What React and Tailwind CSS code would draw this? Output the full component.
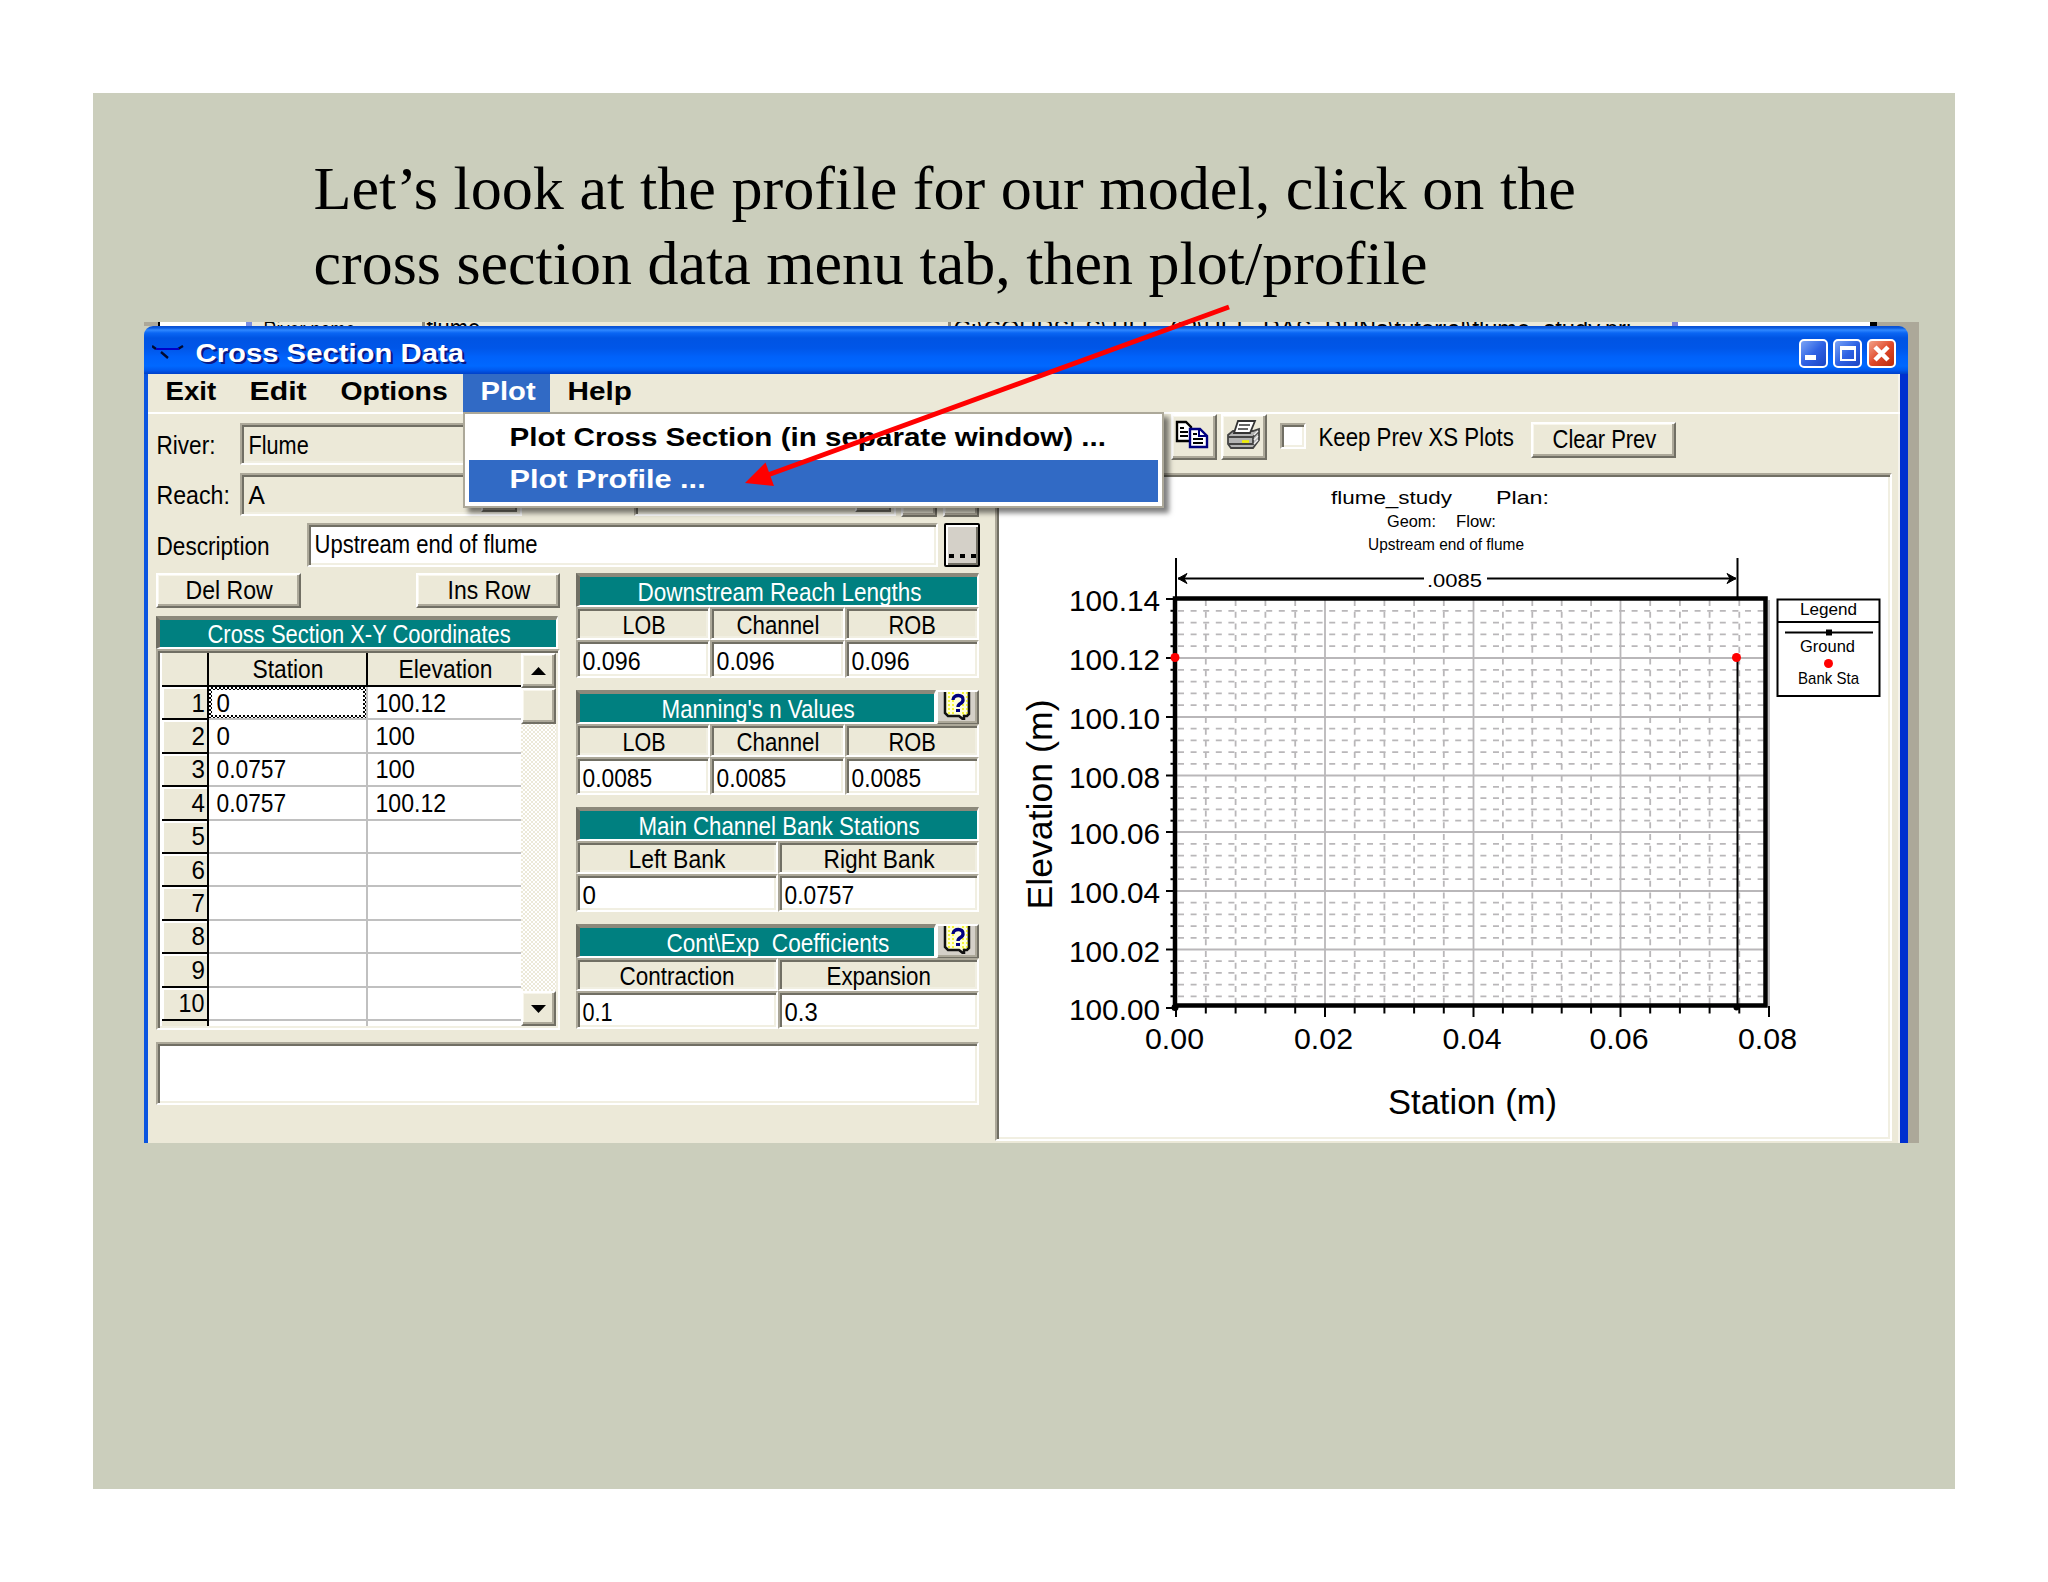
import React, { useLayoutEffect, useRef, useState } from 'react';

const sunken = 'border-2 border-t-[#aca899] border-l-[#aca899] border-r-white border-b-white shadow-[inset_2px_2px_0_#716f64,inset_-2px_-2px_0_#f1efe2]';
const raised = 'border-2 border-t-white border-l-white border-r-[#716f64] border-b-[#716f64] shadow-[inset_-2px_-2px_0_#aca899,inset_1px_1px_0_#f8f6ec] bg-[#ece9d8]';

// stretches its text to w pixels, bitmap fonts are narrower than Arial
function Fit({ w, className = '', children }) {
  const ref = useRef(null);
  const [scale, setScale] = useState(1);

  useLayoutEffect(() => {
    if (ref.current) setScale((w + 2) / ref.current.offsetWidth);
  }, [w]);

  return (
    <span className={'block shrink-0 whitespace-pre ' + className} style={{ width: w }}>
      <span ref={ref} className="inline-block origin-left" style={{ transform: `translateX(-0.5px) scaleX(${scale})` }}>{children}</span>
    </span>
  );
}

function TitleBar() {
  return (
    <div className="flex h-[48px] shrink-0 items-center rounded-t-[9px] bg-[linear-gradient(180deg,#0a4fd0_0px,#0a5be0_2px,#3088ff_4px,#0a66f4_7px,#0054e3_12px,#0056e8_22px,#0062fb_31px,#0068ff_40px,#005af0_44px,#0040c8_48px)] pl-2 pr-3">
      <svg className="mt-[5px] h-[16px] w-[32px] shrink-0" viewBox="0 0 32 16">
        <path d="M0 1 L4 4 M26 4 L31 1 M9 7 L16 13" fill="none" stroke="#000a30" strokeWidth="2.4" />
        <path d="M4 4 H27" stroke="#0000c8" strokeWidth="2" />
      </svg>
      <Fit w={266} className="ml-[12px] mt-[5px] text-[26px] font-bold leading-[36px] text-white [text-shadow:2px_2px_0_#0a1883]">Cross Section Data</Fit>
      <div className="ml-auto mt-[6px] flex gap-[5px]">
        <div className="flex h-[29px] w-[29px] items-end rounded-[5px] border-2 border-white bg-linear-to-br from-[#7ba3f5] via-[#2f62e4] to-[#1c45c4] pb-[6px] pl-[4px]">
          <div className="h-[5px] w-[11px] bg-white"></div>
        </div>
        <div className="flex h-[29px] w-[29px] items-center justify-center rounded-[5px] border-2 border-white bg-linear-to-br from-[#7ba3f5] via-[#2f62e4] to-[#1c45c4]">
          <div className="h-[15px] w-[16px] border-2 border-t-4 border-white"></div>
        </div>
        <div className="flex h-[29px] w-[29px] items-center justify-center rounded-[5px] border-2 border-white bg-linear-to-br from-[#f0a088] via-[#e0492a] to-[#b92b08]">
          <svg className="h-[17px] w-[17px]" viewBox="0 0 17 17"><path d="M2 2 L15 15 M15 2 L2 15" stroke="#fff" strokeWidth="4.5" /></svg>
        </div>
      </div>
    </div>
  );
}

function MenuBar() {
  return (
    <div className="flex h-[40px] shrink-0 items-start border-b-2 border-white text-[26px] font-bold leading-[34px]">
      <Fit w={49} className="ml-[18px]">Exit</Fit>
      <Fit w={55} className="ml-[35px]">Edit</Fit>
      <Fit w={105} className="ml-[36px]">Options</Fit>
      <div className="ml-[17px] h-[38px] w-[87px] bg-[#316ac5] pl-[18px] text-white"><Fit w={53}>Plot</Fit></div>
      <Fit w={62} className="ml-[18px]">Help</Fit>
    </div>
  );
}

function PlotMenu() {
  return (
    <div className="absolute left-[319px] top-[90px] h-[96px] w-[701px] border-2 border-[#aca899] bg-white p-[4px] pt-0 text-[26px] font-bold shadow-[5px_5px_5px_rgba(0,0,0,0.5)]">
      <div className="h-[46px] pl-[41px] leading-[47px]"><Fit w={594}>Plot Cross Section (in separate window) ...</Fit></div>
      <div className="h-[42px] bg-[#316ac5] pl-[41px] leading-[38px] text-white"><Fit w={194}>Plot Profile ...</Fit></div>
    </div>
  );
}

function HelpButton() {
  return (
    <div className="flex h-[35px] w-[43px] shrink-0 justify-center border-2 border-b-[#716f64] border-l-white border-r-[#716f64] border-t-white bg-[#d4d0c8] shadow-[inset_-2px_-2px_0_#aca899]">
      <svg className="h-[28px] w-[30px]" viewBox="0 0 30 28">
        <path d="M3 0 H24 V23 H21 V26 L17 23 H3 Z" fill="#ffffd8" />
        <path d="M6 0 V22 M10 0 V22 M20 0 V22 M24 0 V22 M21 22 V27" stroke="#f4f43c" strokeWidth="2" strokeDasharray="2 2" />
        <path d="M2 0 V21 L5 24 H16 L21 28 V24 H24 L26 22 V0" fill="none" stroke="#111" strokeWidth="2.5" />
        <path d="M10 8 C10 2 21 2 20 8 C20 12 15 11 15 15" fill="none" stroke="#000080" strokeWidth="3.4" />
        <path d="M13 17 h4 v3 h-4 z" fill="#000080" />
      </svg>
    </div>
  );
}

function DataPanel({ title, titleW, titleClass = '', cols, help }) {
  return (
    <div className="mb-[12px] h-[105px]">
      <div className="flex h-[34px]">
        <div className="flex grow items-center justify-center border-b-2 border-l-4 border-r-2 border-t-4 border-b-white border-l-[#716f64] border-r-white border-t-[#8c897b] bg-[#008080] text-white">
          <Fit w={titleW} className={'mt-[1px] leading-[26px] ' + titleClass}>{title}</Fit>
        </div>
        {help && <HelpButton />}
      </div>
      <div className="flex h-[33px]">
        {cols.map(c => (
          <div key={c.label} className={'flex flex-1 items-center justify-center pt-[2px] ' + sunken}><Fit w={c.lw} className="leading-[26px]">{c.label}</Fit></div>
        ))}
      </div>
      <div className="flex h-[38px]">
        {cols.map(c => (
          <div key={c.label} className={'flex flex-1 items-center bg-white pl-[5px] pt-[3px] ' + sunken}><Fit w={c.vw} className="leading-[26px]">{c.value}</Fit></div>
        ))}
      </div>
    </div>
  );
}

const rows = [
  ['0', 11, '100.12', 69],
  ['0', 11, '100', 37],
  ['0.0757', 68, '100', 37],
  ['0.0757', 68, '100.12', 69],
  [], [], [], [], [], [],
];

function CoordinateGrid() {
  return (
    <div className={'flex h-[381px] w-[404px] overflow-hidden bg-white pb-[2px] pl-[4px] pt-[2px] ' + sunken}>
      <div className="w-[359px] shrink-0 overflow-hidden">
        <div className="flex h-[34px] border-b-2 border-black bg-[#ece9d8]">
          <div className="w-[47px] border-r-2 border-black"></div>
          <div className="flex w-[159px] items-center justify-center border-r-2 border-black"><Fit w={69}>Station</Fit></div>
          <div className="flex grow items-center justify-center"><Fit w={92}>Elevation</Fit></div>
        </div>
        {rows.map((r, i) => (
          <div key={i} className="flex h-[33.4px]">
            <div className="flex w-[47px] items-center justify-end border-b-2 border-r-2 border-black bg-[#ece9d8] pr-[4px] shadow-[inset_2px_2px_0_#fff]"><Fit w={i === 9 ? 24 : 11}>{i + 1}</Fit></div>
            <div className={'w-[159px] border-b-2 border-r-2 border-[#c0c0c0] ' + (i === 0 ? 'bg-[repeating-conic-gradient(#000_0_25%,#fff_0_50%)] bg-[length:4px_4px] p-[3px]' : 'p-[3px]')}>
              <div className="flex h-full items-center bg-white pl-[5px]">{r[0] && <Fit w={r[1]}>{r[0]}</Fit>}</div>
            </div>
            <div className="flex grow items-center border-b-2 border-[#c0c0c0] pl-[8px]">{r[2] && <Fit w={r[3]}>{r[2]}</Fit>}</div>
          </div>
        ))}
        <div className="flex h-[10px]">
          <div className="w-[47px] border-r-2 border-black bg-[#ece9d8]"></div>
          <div className="w-[159px] border-r-2 border-[#c0c0c0]"></div>
        </div>
      </div>
      <div className="flex w-[35px] shrink-0 flex-col bg-[repeating-conic-gradient(#ece9d8_0_25%,#fff_0_50%)] bg-[length:4px_4px]">
        <div className={'flex h-[35px] items-center justify-center ' + raised}>
          <svg className="h-[8px] w-[15px]" viewBox="0 0 15 8"><path d="M0 8 L7.5 0 L15 8 Z" /></svg>
        </div>
        <div className={'h-[36px] ' + raised}></div>
        <div className={'mt-auto flex h-[35px] items-center justify-center ' + raised}>
          <svg className="h-[8px] w-[15px]" viewBox="0 0 15 8"><path d="M0 0 L7.5 8 L15 0 Z" /></svg>
        </div>
      </div>
    </div>
  );
}

function EditorForm() {
  return (
    <div className="w-[847px] shrink-0 text-[26px] leading-[30px]">
      <div className="mt-[9px] flex h-[42px] items-center pl-[9px]">
        <Fit w={57} className="mt-[2px]">River:</Fit>
        <div className={'ml-[26px] flex h-[42px] w-[600px] items-center pl-[7px] pt-[2px] ' + sunken}><Fit w={58}>Flume</Fit></div>
      </div>
      <div className="mt-[8px] flex h-[43px] items-start pl-[9px]">
        <Fit w={71} className="mt-[7px]">Reach:</Fit>
        <div className={'ml-[12px] flex h-[43px] w-[282px] items-center justify-between pl-[7px] ' + sunken}>
          <Fit w={14}>A</Fit>
          <div className={'mr-[3px] h-[35px] w-[36px] ' + raised}></div>
        </div>
        <div className={'ml-[112px] flex h-[43px] w-[262px] items-center justify-end ' + sunken}><div className={'mr-[3px] h-[35px] w-[36px] ' + raised}></div></div>
        <div className={'ml-[5px] h-[44px] w-[36px] ' + raised}></div>
        <div className={'ml-[6px] h-[44px] w-[36px] ' + raised}></div>
      </div>
      <div className="mt-[7px] flex h-[44px] items-center pl-[9px]">
        <Fit w={111} className="mt-[1px]">Description</Fit>
        <div className={'ml-[39px] flex h-[44px] w-[631px] items-center bg-white pb-[3px] pl-[6px] ' + sunken}><Fit w={221}>Upstream end of flume</Fit></div>
        <div className="ml-[6px] flex h-[44px] w-[36px] items-end justify-center gap-[6px] rounded-[2px] border-2 border-black bg-[#d4d0c8] pb-[7px] shadow-[inset_2px_2px_0_#fff,inset_-2px_-2px_0_#716f64]">
          <div className="h-[4px] w-[5px] bg-black"></div>
          <div className="h-[4px] w-[5px] bg-black"></div>
          <div className="h-[4px] w-[5px] bg-black"></div>
        </div>
      </div>
      <div className="mt-[6px] flex gap-[16px] pl-[8px]">
        <div className="w-[404px]">
          <div className="flex justify-between">
            <div className={'flex h-[35px] w-[145px] items-center justify-center pb-[2px] ' + raised}><Fit w={85}>Del Row</Fit></div>
            <div className={'flex h-[35px] w-[144px] items-center justify-center pb-[2px] pl-[1px] ' + raised}><Fit w={81}>Ins Row</Fit></div>
          </div>
          <div className="mt-[8px] flex h-[33px] w-[402px] items-center justify-center border-b-2 border-l-4 border-r-2 border-t-4 border-b-white border-l-[#716f64] border-r-white border-t-[#8c897b] bg-[#008080] text-white"><Fit w={301}>Cross Section X-Y Coordinates</Fit></div>
          <CoordinateGrid />
        </div>
        <div className="h-[458px] w-[403px]">
          <DataPanel title="Downstream Reach Lengths" titleW={282} cols={[
            { label: 'LOB', lw: 41, value: '0.096', vw: 56 },
            { label: 'Channel', lw: 81, value: '0.096', vw: 56 },
            { label: 'ROB', lw: 45, value: '0.096', vw: 56 },
          ]} />
          <DataPanel help title="Manning's n Values" titleW={191} cols={[
            { label: 'LOB', lw: 41, value: '0.0085', vw: 68 },
            { label: 'Channel', lw: 81, value: '0.0085', vw: 68 },
            { label: 'ROB', lw: 45, value: '0.0085', vw: 68 },
          ]} />
          <DataPanel title="Main Channel Bank Stations" titleW={279} cols={[
            { label: 'Left Bank', lw: 95, value: '0', vw: 11 },
            { label: 'Right Bank', lw: 109, value: '0.0757', vw: 68 },
          ]} />
          <DataPanel help title={'Cont\\Exp  Coefficients'} titleW={221} titleClass="ml-[40px]" cols={[
            { label: 'Contraction', lw: 113, value: '0.1', vw: 28 },
            { label: 'Expansion', lw: 102, value: '0.3', vw: 31 },
          ]} />
        </div>
      </div>
      <div className={'ml-[8px] mt-[11px] h-[63px] w-[823px] bg-white ' + sunken}></div>
    </div>
  );
}

function Toolbar() {
  return (
    <div className="flex h-[59px] items-start pl-[176px] text-[26px]">
      <div className={'flex h-[46px] w-[46px] justify-center pr-[4px] pt-[4px] ' + raised}>
        <svg className="h-[30px] w-[34px]" viewBox="0 0 34 30">
          <path d="M2 2 H11 L16 7 V21 H2 Z" fill="#fff" stroke="#000" strokeWidth="2.4" />
          <path d="M5 8 H9 M5 12 H13 M5 16 H13" stroke="#000" strokeWidth="2" />
          <path d="M15 9 H25 L32 16 V27 H15 Z" fill="#fff" stroke="#000080" strokeWidth="2.4" />
          <path d="M24 9 V16 H32" fill="none" stroke="#000080" strokeWidth="2" />
          <path d="M18 14 H22 M18 19 H28 M18 23 H28" stroke="#000" strokeWidth="2" />
        </svg>
      </div>
      <div className={'ml-[4px] flex h-[46px] w-[46px] justify-center pt-[4px] ' + raised}>
        <svg className="h-[30px] w-[34px]" viewBox="0 0 34 30">
          <path d="M1 15 L6 11 H26 L32 9 V20 L26 28 H4 L1 24 Z" fill="#b4b4b4" stroke="#444" strokeWidth="1.8" />
          <path d="M7 13 L11 1 H28 L23 13 Z" fill="#fff" stroke="#333" strokeWidth="1.8" />
          <path d="M12 5 H23 M11 9 H21" stroke="#333" strokeWidth="1.6" />
          <path d="M1 17 H26 L32 11 M2 24 H26 V17" fill="none" stroke="#444" strokeWidth="1.8" />
          <path d="M27 15 L31 11 M27 20 L31 16 M27 24 L31 20" stroke="#eee" strokeWidth="1.4" />
          <path d="M15 21.5 H22" stroke="#f0f000" strokeWidth="2.6" />
        </svg>
      </div>
      <div className={'ml-[13px] mt-[9px] h-[26px] w-[26px] bg-white ' + sunken}></div>
      <Fit w={193} className="ml-[13px] mt-[7px] leading-[32px]">Keep Prev XS Plots</Fit>
      <div className={'ml-[19px] mt-[8px] flex h-[36px] w-[145px] items-center justify-center pb-[2px] leading-[30px] ' + raised}><Fit w={102}>Clear Prev</Fit></div>
    </div>
  );
}

function Label({ x, y, w, size, children }) {
  return (
    <text x={x} y={y} fontSize={size} textLength={w} lengthAdjust="spacingAndGlyphs">{children}</text>
  );
}

function ProfileChart() {
  const major = [1176, 1325, 1473.5, 1620.5, 1769];
  const levels = [599, 658, 717, 775.5, 832, 891, 949.5, 1008];
  const minorX = [];
  for (let i = 0; i < 4; i++) for (let k = 1; k < 5; k++) minorX.push(major[i] + (major[i + 1] - major[i]) * k / 5);
  const minorY = [];
  for (let i = 0; i < 7; i++) for (let k = 1; k < 5; k++) minorY.push(levels[i] + (levels[i + 1] - levels[i]) * k / 5);

  return (
    <svg className="block h-[660px] w-[889px] font-['Liberation_Sans']" viewBox="999 477 889 660">
      <g stroke="#b9b7b9" strokeWidth="1.8" fill="none">
        {minorX.map(x => <path key={x} d={`M${x} 600 V1006`} strokeDasharray="6 5.7" />)}
        {minorY.map(y => <path key={y} d={`M1178 ${y} H1764`} strokeDasharray="6 6.6" />)}
        {major.slice(1).map(x => <path key={x} d={`M${x} 600 V1006`} />)}
        {levels.slice(1, 7).map(y => <path key={y} d={`M1176 ${y} H1764`} />)}
      </g>
      <g stroke="#000" strokeWidth="2" fill="none">
        {levels.map(y => <path key={y} d={`M1166 ${y} H1176`} />)}
        {minorY.map(y => <path key={y} d={`M1170.5 ${y} H1176`} />)}
        {major.map(x => <path key={x} d={`M${x} 1006 V1017`} />)}
        {minorX.map(x => <path key={x} d={`M${x} 1006 V1013.5`} />)}
        <path d="M1175 598.5 H1765.5 V1005.5 H1175 Z" strokeWidth="4.5" />
        <path d="M1176 558 V600 M1737.5 558 V600" />
        <path d="M1178 578.5 H1424 M1487 578.5 H1736 M1737.5 658 V1007" />
      </g>
      <path d="M1178 578.5 L1187 573.5 L1184 578.5 L1187 583.5 Z M1736 578.5 L1727 573.5 L1730 578.5 L1727 583.5 Z" stroke="#000" />
      <circle cx="1175" cy="1007.5" r="3.5" />
      <circle cx="1736.5" cy="1007.5" r="3" />
      <circle cx="1175" cy="657.5" r="4.5" fill="#f00" />
      <circle cx="1736.5" cy="657.5" r="4.5" fill="#f00" />

      <Label x={1331} y={504} w={121} size={19}>flume_study</Label>
      <Label x={1496} y={504} w={53} size={19}>Plan:</Label>
      <Label x={1387} y={527} w={49} size={17}>Geom:</Label>
      <Label x={1456} y={527} w={40} size={17}>Flow:</Label>
      <Label x={1368} y={550} w={156} size={17}>Upstream end of flume</Label>
      <Label x={1427} y={587} w={55} size={19}>.0085</Label>

      {levels.map((y, i) => <Label key={y} x={1069} y={y + 12} w={91} size={29}>{(100.14 - i * 0.02).toFixed(2)}</Label>)}
      {major.map((x, i) => <Label key={x} x={x - 31} y={1049} w={59} size={29}>{(i * 0.02).toFixed(2)}</Label>)}
      <Label x={1388} y={1114} w={169} size={35}>Station (m)</Label>
      <g transform="translate(1051.5 909.5) rotate(-90)"><Label x={0} y={0} w={210} size={35}>Elevation (m)</Label></g>

      <path d="M1777.5 599.5 H1879.5 V696 H1777.5 Z M1777.5 622 H1879.5 M1785 632.5 H1873" fill="none" stroke="#000" strokeWidth="2" />
      <path d="M1826 629.5 h6 v6 h-6 z" />
      <circle cx="1828.5" cy="663.5" r="4.5" fill="#f00" />
      <Label x={1800} y={615} w={57} size={17}>Legend</Label>
      <Label x={1800} y={652} w={55} size={17}>Ground</Label>
      <Label x={1798} y={684} w={61} size={17}>Bank Sta</Label>
    </svg>
  );
}

// sliver of the main window that stays visible above the editor
function BackWindow() {
  return (
    <div className="flex h-[4px] shrink-0 overflow-hidden bg-[#ece9d8] text-[26px] leading-[30px]">
      <div className="w-[14px] bg-[#aca899]"></div>
      <div className="w-[2px] bg-black"></div>
      <div className="w-[86px] bg-white"></div>
      <div className="w-[6px] bg-[#7b8fe0]"></div>
      <Fit w={90} className="-mt-[7px] ml-[12px]">River name</Fit>
      <div className="ml-[68px] w-[3px] bg-[#8c897b]"></div>
      <Fit w={52} className="-mt-[9px] ml-[2px]">flume</Fit>
      <div className="ml-[469px] w-[3px] bg-[#8c897b]"></div>
      <Fit w={676} className="-mt-[8px] ml-[3px]">C:\COURSES\TILE_03\HEL_RAS_RUNs\tutorial\flume_study.prj</Fit>
      <div className="ml-[42px] w-[6px] bg-[#7b7fd8]"></div>
      <div className="w-[192px] bg-white"></div>
      <div className="w-[7px] bg-black"></div>
      <div className="grow bg-[#aca899]"></div>
    </div>
  );
}

export default function App() {
  return (
    <div className="h-[1582px] w-[2048px] overflow-hidden bg-white pl-[93px] pt-[93px] font-['Liberation_Sans'] text-black">
      <div className="relative h-[1396px] w-[1862px] bg-[#cbcebc]">
        <div className="h-[229px] pl-[221px] pt-[58px] font-['Liberation_Serif'] text-[61.5px] leading-[75px]">
          <Fit w={1260}>Let’s look at the profile for our model, click on the</Fit>
          <Fit w={1112}>cross section data menu tab, then plot/profile</Fit>
        </div>
        <div className="relative ml-[51px] flex h-[821px] w-[1775px] flex-col">
          <BackWindow />
          <div className="flex grow flex-col bg-[linear-gradient(90deg,#cbcebc_50%,#aca899_50%)]">
            <div className="flex w-[1764px] grow flex-col">
              <TitleBar />
              <div className="flex grow flex-col border-l-4 border-r-8 border-l-[#0a55e0] border-r-[#0030d0] bg-[#ece9d8] shadow-[inset_-2px_0_0_#f6f4ec]">
                <MenuBar />
                <div className="flex grow">
                  <EditorForm />
                  <div className="w-[897px]">
                    <Toolbar />
                    <div className={'h-[668px] bg-white pl-[2px] pt-[2px] ' + sunken}>
                      <ProfileChart />
                    </div>
                  </div>
                </div>
              </div>
            </div>
          </div>
          <PlotMenu />
        </div>
        <svg className="absolute left-[640px] top-[200px] h-[200px] w-[510px]" viewBox="733 293 510 200">
          <path d="M1229 307 L765 476" stroke="#f00" strokeWidth="5" />
          <path d="M745 483 L765.5 462.5 L774 486 Z" fill="#f00" />
        </svg>
      </div>
    </div>
  );
}
